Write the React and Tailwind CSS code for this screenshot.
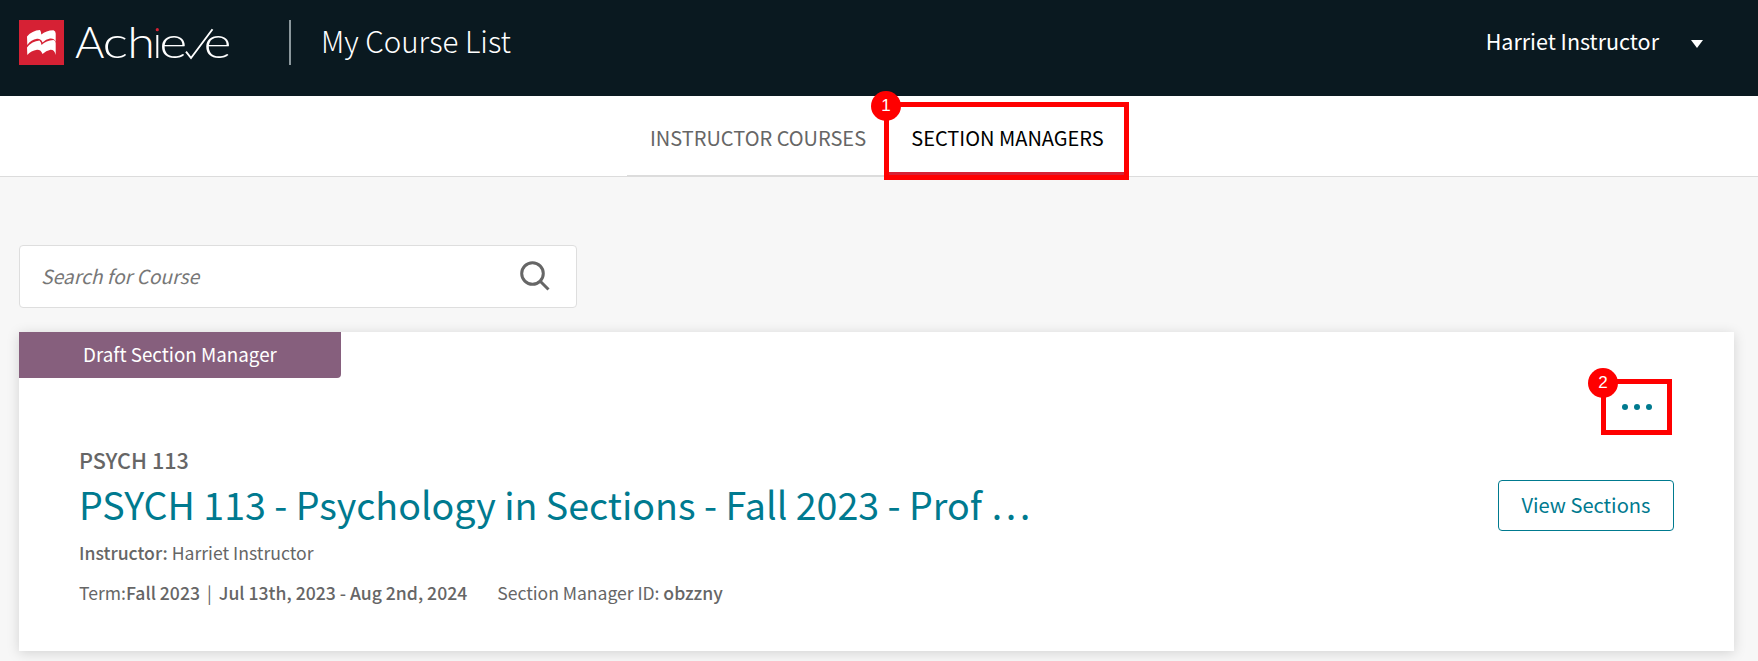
import clsx from 'clsx';

const TABS = [
  { label: 'INSTRUCTOR COURSES', active: false },
  { label: 'SECTION MANAGERS', active: true },
];

const WORDMARK = [
  { char: 'A', x: 56, width: 29.5 },
  { char: 'c', x: 83.5, width: 25.5 },
  { char: 'h', x: 108.2, width: 27.7 },
  { char: 'e', x: 140.3, width: 28 },
  { char: 'e', x: 184.6, width: 28 },
];

function Logo() {
  return (
    <svg className="overflow-visible" width="220" height="45" viewBox="0 0 220 45" aria-label="Achieve">
      <rect width="45" height="45" fill="#d62134" />
      <g fill="#fff">
        <path d="M8 16.500 Q13 10.500 21 10 Q22.300 12 22.300 14.500 Q27 10.500 34.500 10.300 Q36.700 11 36.700 13.500 V21.500 Q35 18 31 18.500 Q27 19 23.500 22.500 Q22 18.500 18 18.800 Q12 19.500 8.300 25 Z" />
        <path d="M8 27.500 Q13 21 20.500 20.500 Q22.300 22 22.500 25 Q27 20.500 34.500 20 Q36.700 20.700 36.700 23 V35 Q35.500 29.500 31.500 29.700 Q27 30.500 23.500 34 Q22 29.500 18 29.700 Q12 30.500 8.300 35 Z" />
      </g>
      {WORDMARK.map(({ char, x, width }) => (
        <text
          key={x}
          x={x}
          y="38"
          textLength={width}
          lengthAdjust="spacingAndGlyphs"
          fill="#fff"
          fontSize="44"
          fontWeight="300"
          fontFamily="Lato, sans-serif"
        >
          {char}
        </text>
      ))}
      <circle cx="138.300" cy="9.700" r="1.600" fill="#d62134" />
      <path d="M138.300 15 V38" stroke="#fff" strokeWidth="2" />
      <path d="M167 31.700 L172 38 L193.500 9.300" fill="none" stroke="#fff" strokeWidth="1.900" />
    </svg>
  );
}

function Callout({ number, className }) {
  return (
    <div className={clsx('absolute border-[5px] border-[#ff0000]', className)}>
      <span className="absolute -left-[18px] -top-[16px] flex h-[30px] w-[30px] items-center justify-center rounded-full bg-[#ff0000] font-['Liberation_Sans',sans-serif] text-[17px] text-white">
        {number}
      </span>
    </div>
  );
}

export default function App() {
  return (
    <div className="h-[661px] w-[1758px] overflow-hidden bg-[#f7f7f7] font-['Noto_Sans_CJK_SC',sans-serif] text-[#666666]">
      {/* Header */}
      <header className="flex h-24 items-start bg-[#0a1920] pl-[19px] pr-[55px] pt-5 text-white">
        <Logo />
        <div className="ml-[50px] h-[45px] w-0.5 bg-[#8b979c]" />
        <h1 className="ml-[30px] text-[29.5px] font-light leading-[41px]">My Course List</h1>
        <button className="ml-auto flex items-center text-[21.5px] leading-[41px]">
          <span>Harriet Instructor</span>
          <span className="ml-[32px] mt-[7px] border-x-[6.5px] border-t-[8px] border-x-transparent border-t-white" />
        </button>
      </header>

      {/* Tabs */}
      <nav className="flex h-[81px] justify-center border-b border-[#dcdcdc] bg-white pr-[5px]">
        {TABS.map(({ label, active }) => (
          <div
            key={label}
            className={clsx(
              'relative flex h-20 items-center justify-center pt-1 text-[20px]',
              active
                ? 'w-[237px] text-black shadow-[inset_0_-4px_0_#d62134]'
                : 'w-[262px] shadow-[inset_0_-1px_0_#dcdcdc]'
            )}
          >
            <span>{label}</span>
            {active && <Callout number={1} className="-bottom-1 -left-[5px] h-[78px] w-[245px]" />}
          </div>
        ))}
      </nav>

      <main className="pl-[19px] pr-6 pt-[68px]">
        {/* Search */}
        <div className="flex h-[63px] w-[558px] items-center justify-between rounded border border-[#dedede] bg-white pl-[21px] pr-[26px]">
          <span className="text-[19.3px] italic text-[#777777]">Search for Course</span>
          <svg className="-mt-[2px]" width="30" height="30" viewBox="0 0 30 30" fill="none" stroke="#666" strokeWidth="3">
            <circle cx="12.500" cy="12.500" r="10.800" />
            <path d="M20 20 L28.500 28.500" />
          </svg>
        </div>

        {/* Course card */}
        <section className="mt-6 h-[319px] bg-white shadow-[0_2px_12px_rgba(0,0,0,0.15)]">
          <div className="flex h-[46px] w-[322px] items-center justify-center rounded-br bg-[#865f7d] pb-[1px] text-[18.8px] text-white">
            Draft Section Manager
          </div>

          <div className="flex justify-between pl-[60px] pr-[60px]">
            <div className="pt-[67px]">
              <p className="text-[21.6px] font-medium leading-[30px]">PSYCH 113</p>
              <h2 className="mt-1 text-[37.6px] leading-[50px] text-[#007a8f]">
                PSYCH 113 - Psychology in Sections - Fall 2023 - Prof …
              </h2>
              <p className="mt-[11px] text-[17.6px] leading-[26px]">
                <b className="font-medium">Instructor:</b> Harriet Instructor
              </p>
              <div className="mt-[14px] flex text-[17.6px] leading-[26px]">
                <span>
                  Term:<b className="font-medium">Fall 2023</b>
                </span>
                <span className="mx-[7px]">|</span>
                <b className="font-medium">Jul 13th, 2023 - Aug 2nd, 2024</b>
                <span className="ml-[30px] tracking-[-0.04px]">
                  Section Manager ID: <b className="font-medium">obzzny</b>
                </span>
              </div>
            </div>

            <div className="flex flex-col items-end">
              <button className="relative mr-[2px] mt-px flex h-14 w-[71px] items-center justify-center gap-1.5">
                <span className="h-1.5 w-1.5 rounded-full bg-[#007a8f]" />
                <span className="h-1.5 w-1.5 rounded-full bg-[#007a8f]" />
                <span className="h-1.5 w-1.5 rounded-full bg-[#007a8f]" />
                <Callout number={2} className="inset-0" />
              </button>
              <button className="mt-[45px] h-[51px] w-[176px] rounded border border-[#007a8f] text-[20.1px] text-[#007a8f]">
                View Sections
              </button>
            </div>
          </div>
        </section>
      </main>
    </div>
  );
}
